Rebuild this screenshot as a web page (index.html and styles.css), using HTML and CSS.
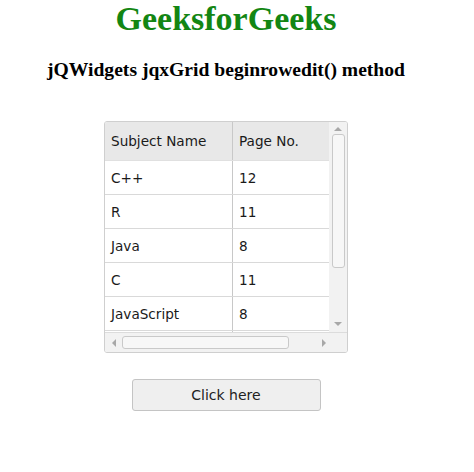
FILE: index.html
```html
<!DOCTYPE html>
<html>
<head>
<meta charset="utf-8">
<link rel="stylesheet" href="styles.css">
</head>
<body>
<div class="page">
  <h1 class="title">GeeksforGeeks</h1>
  <h3 class="subtitle">jQWidgets jqxGrid beginrowedit() method</h3>
  <div class="grid">
    <div class="grid-body">
      <div class="table">
        <div class="row head">
          <div class="cell c1">Subject Name</div>
          <div class="cell c2">Page No.</div>
        </div>
        <div class="row"><div class="cell c1">C++</div><div class="cell c2">12</div></div>
        <div class="row"><div class="cell c1">R</div><div class="cell c2">11</div></div>
        <div class="row"><div class="cell c1">Java</div><div class="cell c2">8</div></div>
        <div class="row"><div class="cell c1">C</div><div class="cell c2">11</div></div>
        <div class="row"><div class="cell c1">JavaScript</div><div class="cell c2">8</div></div>
        <div class="row"><div class="cell c1"></div><div class="cell c2"></div></div>
      </div>
      <div class="vscroll">
        <div class="arrow up"></div>
        <div class="vtrack"><div class="vthumb"></div></div>
        <div class="arrow down"></div>
      </div>
    </div>
    <div class="hscroll">
      <div class="arrow left"></div>
      <div class="htrack"><div class="hthumb"></div></div>
      <div class="arrow right"></div>
    </div>
  </div>
  <button class="btn">Click here</button>
</div>
</body>
</html>
```

FILE: styles.css
```css
html, body {
  margin: 0;
  padding: 0;
  background: #ffffff;
}
.page {
  width: 452px;
  display: flex;
  flex-direction: column;
  align-items: center;
  font-family: "Liberation Serif", "Times New Roman", serif;
}
.title {
  margin: 0;
  color: #138613;
  font-size: 34px;
  line-height: 38px;
  font-weight: bold;
}
.subtitle {
  margin: 20px 0 0 0;
  font-size: 19.6px;
  line-height: 24px;
  font-weight: bold;
  color: #000;
}
.grid {
  margin-top: 39px;
  width: 242px;
  height: 230px;
  border: 1px solid #cfcfcf;
  border-radius: 3px;
  display: flex;
  flex-direction: column;
  overflow: hidden;
  font-family: "DejaVu Sans", Verdana, sans-serif;
  font-size: 13.6px;
  color: #1a1a1a;
}
.grid-body {
  flex: 1;
  display: flex;
  overflow: hidden;
}
.table {
  flex: 1;
  display: flex;
  flex-direction: column;
  overflow: hidden;
}
.row {
  display: flex;
  height: 33px;
  flex: none;
  border-bottom: 1px solid #d9d9d9;
  background: #fff;
}
.row.head {
  height: 38px;
  background: #e8e8e8;
  border-bottom: 1px solid #e0e0e0;
}
.cell {
  display: flex;
  align-items: center;
  padding-left: 6px;
  box-sizing: border-box;
}
.c1 {
  width: 128px;
  border-right: 1px solid #c8c8c8;
}
.c2 {
  flex: 1;
}
.vscroll {
  width: 18px;
  background: #f2f2f2;
  display: flex;
  flex-direction: column;
  align-items: center;
}
.vtrack {
  flex: 1;
  width: 100%;
  display: flex;
  justify-content: center;
}
.vthumb {
  margin-top: 3px;
  width: 13px;
  height: 134px;
  box-sizing: border-box;
  background: #f7f7f7;
  border: 1px solid #c9c9c9;
  border-radius: 3px;
}
.arrow {
  width: 0;
  height: 0;
  flex: none;
}
.up {
  margin-top: 5px;
  border-left: 4px solid transparent;
  border-right: 4px solid transparent;
  border-bottom: 4px solid #a8a8a8;
}
.down {
  margin: 0 0 6px 0;
  border-left: 4px solid transparent;
  border-right: 4px solid transparent;
  border-top: 4px solid #a8a8a8;
}
.hscroll {
  height: 19px;
  flex: none;
  background: #f2f2f2;
  border-top: 1px solid #dcdcdc;
  display: flex;
  align-items: center;
}
.left {
  margin-left: 7px;
  border-top: 4px solid transparent;
  border-bottom: 4px solid transparent;
  border-right: 4px solid #a8a8a8;
}
.right {
  margin-right: 21px;
  border-top: 4px solid transparent;
  border-bottom: 4px solid transparent;
  border-left: 4px solid #a8a8a8;
}
.htrack {
  flex: 1;
  display: flex;
  padding-left: 6px;
}
.hthumb {
  width: 167px;
  height: 13px;
  box-sizing: border-box;
  background: #f7f7f7;
  border: 1px solid #c9c9c9;
  border-radius: 3px;
}
.btn {
  margin-top: 26px;
  width: 189px;
  height: 32px;
  background: #efefef;
  border: 1px solid #c4c4c4;
  border-radius: 3px;
  font-family: "DejaVu Sans", Verdana, sans-serif;
  font-size: 14px;
  color: #222;
  padding: 0;
}
```
